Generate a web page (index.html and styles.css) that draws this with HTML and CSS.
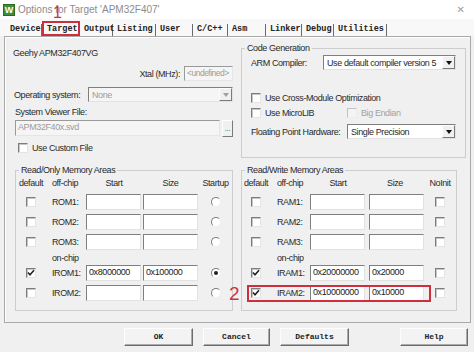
FILE: index.html
```html
<!DOCTYPE html>
<html lang="en">
<head>
  <meta charset="UTF-8">
  <title>Options for Target 'APM32F407'</title>
  <link rel="stylesheet" href="styles.css">
</head>
<body>

<!-- window caption -->
<div class="titlebar">
  <span class="appicon">W</span>
  <span class="title">Options for Target 'APM32F407'</span>
  <span class="close">&#x2715;</span>
</div>

<!-- tab strip -->
<div class="tabs">
  <span class="tab">Device</span>
  <span class="tab sel">Target</span>
  <span class="tab">Output</span>
  <span class="tab">Listing</span>
  <span class="tab">User</span>
  <span class="tab">C/C++</span>
  <span class="tab">Asm</span>
  <span class="tab">Linker</span>
  <span class="tab">Debug</span>
  <span class="tab">Utilities</span>
</div>
<span class="mark mark1">1</span>

<div class="panel">
  <div class="top">
    <div class="target-left">
      <div class="device">Geehy APM32F407VG</div>
      <div class="row xtal">
        <span>Xtal (MHz):</span>
        <span class="edit disabled xtal-box">&lt;undefined&gt;</span>
      </div>
      <div class="row os">
        <span class="os-lbl">Operating system:</span>
        <div class="combo disabled os-combo"><span>None</span><i class="arrow"></i></div>
      </div>
      <div class="svf-lbl">System Viewer File:</div>
      <div class="row svf">
        <span class="edit disabled svf-box">APM32F40x.svd</span>
        <span class="browse">...</span>
      </div>
      <div class="check custom"><span class="box"></span>Use Custom File</div>
    </div>

    <fieldset class="group codegen">
      <legend>Code Generation</legend>
      <div class="inner">
        <div class="row arm">
          <span class="arm-lbl">ARM Compiler:</span>
          <div class="combo arm-combo"><span>Use default compiler version 5</span><i class="arrow"></i></div>
        </div>
        <div class="check cmo"><span class="box"></span>Use Cross-Module Optimization</div>
        <div class="row micro">
          <div class="check microlib"><span class="box"></span>Use MicroLIB</div>
          <div class="check off"><span class="box"></span>Big Endian</div>
        </div>
        <div class="row fp">
          <span class="fp-lbl">Floating Point Hardware:</span>
          <div class="combo fp-combo"><span>Single Precision</span><i class="arrow"></i></div>
        </div>
      </div>
    </fieldset>
  </div>

  <div class="memory">
    <fieldset class="group mem rom">
      <legend>Read/Only Memory Areas</legend>
      <div class="grid">
        <span class="hd">default</span><span class="hd lbl">off-chip</span><span class="hd">Start</span><span class="hd">Size</span><span class="hd">Startup</span>

        <span class="box"></span><span class="lbl">ROM1:</span><span class="edit"></span><span class="edit size"></span><span class="radio"></span>
        <span class="box"></span><span class="lbl">ROM2:</span><span class="edit"></span><span class="edit size"></span><span class="radio"></span>
        <span class="box"></span><span class="lbl">ROM3:</span><span class="edit"></span><span class="edit size"></span><span class="radio"></span>

        <span></span><span class="lbl">on-chip</span><span></span><span></span><span></span>

        <span class="box"><svg width="8" height="8" viewBox="0 0 8 8"><polyline points="1,3.5 3,5.8 7,1.2" fill="none" stroke="#222" stroke-width="1.6"/></svg></span><span class="lbl">IROM1:</span><span class="edit">0x8000000</span><span class="edit size">0x100000</span><span class="radio on"></span>
        <span class="box"></span><span class="lbl">IROM2:</span><span class="edit"></span><span class="edit size"></span><span class="radio"></span>
      </div>
    </fieldset>

    <fieldset class="group mem ram">
      <legend>Read/Write Memory Areas</legend>
      <div class="grid">
        <span class="hd">default</span><span class="hd lbl">off-chip</span><span class="hd">Start</span><span class="hd">Size</span><span class="hd">NoInit</span>

        <span class="box"></span><span class="lbl">RAM1:</span><span class="edit"></span><span class="edit size"></span><span class="box"></span>
        <span class="box"></span><span class="lbl">RAM2:</span><span class="edit"></span><span class="edit size"></span><span class="box"></span>
        <span class="box"></span><span class="lbl">RAM3:</span><span class="edit"></span><span class="edit size"></span><span class="box"></span>

        <span></span><span class="lbl">on-chip</span><span></span><span></span><span></span>

        <span class="box"><svg width="8" height="8" viewBox="0 0 8 8"><polyline points="1,3.5 3,5.8 7,1.2" fill="none" stroke="#222" stroke-width="1.6"/></svg></span><span class="lbl">IRAM1:</span><span class="edit">0x20000000</span><span class="edit size">0x20000</span><span class="box"></span>
        <span class="box"><svg width="8" height="8" viewBox="0 0 8 8"><polyline points="1,3.5 3,5.8 7,1.2" fill="none" stroke="#222" stroke-width="1.6"/></svg></span><span class="lbl">IRAM2:</span><span class="edit">0x10000000</span><span class="edit size">0x10000</span><span class="box"></span>
      </div>
    </fieldset>
    <span class="redbox"></span>
    <span class="mark mark2">2</span>
  </div>
</div>

<div class="buttons">
  <span class="btn ok">OK</span>
  <span class="btn cancel">Cancel</span>
  <span class="btn defaults">Defaults</span>
  <span class="btn help">Help</span>
</div>

</body>
</html>
```

FILE: styles.css
```css
* {
  box-sizing: border-box;
}
body {
  margin: 0;
  width: 474px;
  height: 352px;
  overflow: hidden;
  position: relative;
  background: #f0f0f0;
  font-family: "Liberation Sans", sans-serif;
  font-size: 9px;
  letter-spacing: -0.4px;
  color: #2a2a2a;
}

/* caption */
.titlebar {
  height: 19px;
  background: #fff;
  display: flex;
  align-items: center;
  padding-left: 3px;
  letter-spacing: normal;
}
.appicon {
  width: 12px;
  height: 12px;
  background: #3f8f38;
  border: 1px solid #2a6a25;
  color: #fff;
  font: bold 9px/10px "Liberation Sans", sans-serif;
  text-align: center;
}
.title {
  margin-left: 3px;
  color: #8c8c8c;
  font: 10px "Liberation Sans", sans-serif;
}
.close {
  margin-left: auto;
  margin-right: 9px;
  color: #a0a0a0;
  font: 10px "DejaVu Sans", sans-serif;
}

/* tabs */
.tabs {
  height: 17px;
  background: #f8f8f8;
  padding-left: 3px;
  display: grid;
  grid-template-columns: 39px 38px 33px 43px 37px 35px 38px 36px 32px 53px;
  align-items: end;
  font: bold 8.5px/11px "Liberation Mono", monospace;
  letter-spacing: normal;
  color: #222;
}
.tab {
  height: 12px;
  padding-left: 4px;
  border-right: 1px solid #6a6a6a;
  white-space: nowrap;
}
.tab:first-child {
  padding-left: 7px;
}
.tab.sel {
  height: 15px;
  padding-left: 3px;
  line-height: 12px;
  border: 2px solid #cf2f3d;
}
.mark {
  position: absolute;
  color: #cc3344;
  font-family: "Liberation Sans", sans-serif;
  letter-spacing: normal;
}
.mark1 {
  left: 53px;
  top: 5px;
  font-size: 16px;
  line-height: 16px;
}

/* main page */
.panel {
  margin-left: 4px;
  width: 467px;
  height: 287px;
  border: 1px solid #a9a9a9;
  box-shadow: inset 1px 1px #fff;
}
.top {
  display: flex;
  align-items: flex-start;
}
.target-left {
  margin-left: 8px;
  width: 220px;
}
.device {
  margin-top: 10px;
  line-height: 12px;
}
.row {
  display: flex;
  align-items: center;
}
.xtal {
  margin-top: 7px;
  justify-content: flex-end;
}
.edit {
  display: block;
  height: 16px;
  padding-left: 2px;
  background: #fff;
  border: 1px solid;
  border-color: #7f7f7f #e2e2e2 #e2e2e2 #7f7f7f;
  line-height: 12px;
  white-space: nowrap;
  overflow: hidden;
}
.edit.disabled {
  background: #f5f5f5;
  color: #9c9c9c;
  border-color: #9a9a9a #e6e6e6 #e6e6e6 #9a9a9a;
}
.xtal-box {
  width: 49px;
  height: 15px;
  margin-left: 4px;
  font-size: 8.5px;
  letter-spacing: -0.5px;
}
.os {
  margin-top: 6px;
}
.os-lbl {
  width: 75px;
  padding-left: 1px;
}
.combo {
  height: 15px;
  display: flex;
  align-items: center;
  padding-left: 3px;
  background: #fff;
  border: 1px solid;
  border-color: #7f7f7f #e2e2e2 #e2e2e2 #7f7f7f;
  white-space: nowrap;
}
.combo.disabled {
  background: #f5f5f5;
  color: #9c9c9c;
}
.arrow {
  margin-left: auto;
  width: 13px;
  height: 13px;
  background: #f0f0f0;
  border: 1px solid;
  border-color: #fdfdfd #7a7a7a #7a7a7a #fdfdfd;
  display: flex;
  align-items: center;
  justify-content: center;
}
.arrow::after {
  content: "";
  border-top: 4px solid #111;
  border-left: 3.5px solid transparent;
  border-right: 3.5px solid transparent;
}
.disabled .arrow::after {
  border-top-color: #a0a0a0;
}
.os-combo {
  width: 145px;
}
.svf-lbl {
  margin-top: 4px;
  padding-left: 2px;
  line-height: 12px;
}
.svf {
  margin-top: 2px;
  align-items: flex-start;
}
.svf-box {
  width: 205px;
  margin-left: 2px;
}
.browse {
  width: 11px;
  height: 17px;
  margin-left: 2px;
  background: #f0f0f0;
  border: 1px solid;
  border-color: #fdfdfd #7a7a7a #7a7a7a #fdfdfd;
  font-size: 8px;
  line-height: 16px;
  text-align: center;
  color: #555;
}
.check {
  display: flex;
  align-items: center;
  height: 14px;
  white-space: nowrap;
}
.custom {
  margin-top: 4px;
  padding-left: 5px;
}
.box {
  width: 10px;
  height: 10px;
  flex: none;
  background: #fff;
  border: 1px solid;
  border-color: #7d7d7d #e4e4e4 #e4e4e4 #7d7d7d;
  box-shadow: inset 1px 1px #c6c6c6;
  display: flex;
  align-items: center;
  justify-content: center;
}
.check .box {
  margin-right: 4px;
}
.check.off {
  color: #a2a2a2;
}
.check.off .box {
  background: #f4f4f4;
  border-color: #c2c2c2 #ececec #ececec #c2c2c2;
  box-shadow: none;
}
.radio {
  width: 10px;
  height: 10px;
  border-radius: 50%;
  background: #fff;
  border: 1px solid;
  border-color: #7d7d7d #eeeeee #eeeeee #7d7d7d;
  display: flex;
  align-items: center;
  justify-content: center;
}
.radio.on::after {
  content: "";
  width: 4px;
  height: 4px;
  border-radius: 50%;
  background: #222;
}

/* group boxes */
.group {
  margin: 0;
  padding: 0;
  min-width: 0;
  border: 1px solid #cdcdcd;
}
.group legend {
  margin-left: 3px;
  padding: 0 2px;
  line-height: 12px;
}
.codegen {
  margin-left: 8px;
  margin-top: 5px;
  width: 225px;
  height: 116px;
}
.codegen .inner {
  padding-left: 9px;
}
.arm {
  margin-top: 1px;
}
.arm-lbl {
  width: 72px;
}
.arm-combo {
  width: 133px;
}
.cmo {
  margin-top: 21px;
}
.micro {
  margin-top: 1px;
}
.microlib {
  width: 96px;
}
.fp {
  margin-top: 4px;
}
.fp-lbl {
  width: 96px;
}
.fp-combo {
  width: 109px;
}

/* memory areas */
.memory {
  display: flex;
  margin-top: 6px;
  position: relative;
}
.mem {
  height: 147px;
}
.rom {
  margin-left: 10px;
  width: 218px;
}
.ram {
  margin-left: 8px;
  width: 216px;
}
.grid {
  display: grid;
  grid-template-rows: 16px 20px 20px 20px 11px 20px 20px;
  align-items: center;
}
.rom .grid {
  grid-template-columns: 30px 40px 56px 57px 33px;
}
.ram .grid {
  grid-template-columns: 28px 40px 56px 58px 32px;
}
.grid .hd {
  align-self: start;
  line-height: 14px;
  text-align: center;
}
.grid .lbl {
  padding-left: 6px;
  text-align: left;
}
.ram .grid .lbl {
  padding-left: 7px;
}
.grid .box,
.grid .radio {
  justify-self: center;
}
.grid .edit {
  width: 55px;
  color: #222;
}
.rom .grid .size {
  margin-left: 1px;
}
.ram .grid .size {
  margin-left: 3px;
}
.redbox {
  position: absolute;
  left: 242px;
  top: 121px;
  width: 184px;
  height: 17px;
  border: 2px solid #cf2f3d;
}
.mark2 {
  left: 224px;
  top: 120px;
  font-size: 19px;
  line-height: 19px;
}

/* dialog buttons */
.buttons {
  display: flex;
  margin-top: 5px;
}
.btn {
  height: 18px;
  width: 69px;
  background: #f3f3f3;
  border: 1px solid;
  border-color: #fdfdfd #6b6b6b #6b6b6b #fdfdfd;
  box-shadow: inset -1px -1px #ababab;
  font: bold 8px/16px "Liberation Mono", monospace;
  letter-spacing: normal;
  text-align: center;
  color: #222;
}
.ok {
  margin-left: 124px;
}
.cancel {
  margin-left: 10px;
  width: 67px;
}
.defaults {
  margin-left: 10px;
}
.help {
  margin-left: 51px;
  width: 68px;
}
```
